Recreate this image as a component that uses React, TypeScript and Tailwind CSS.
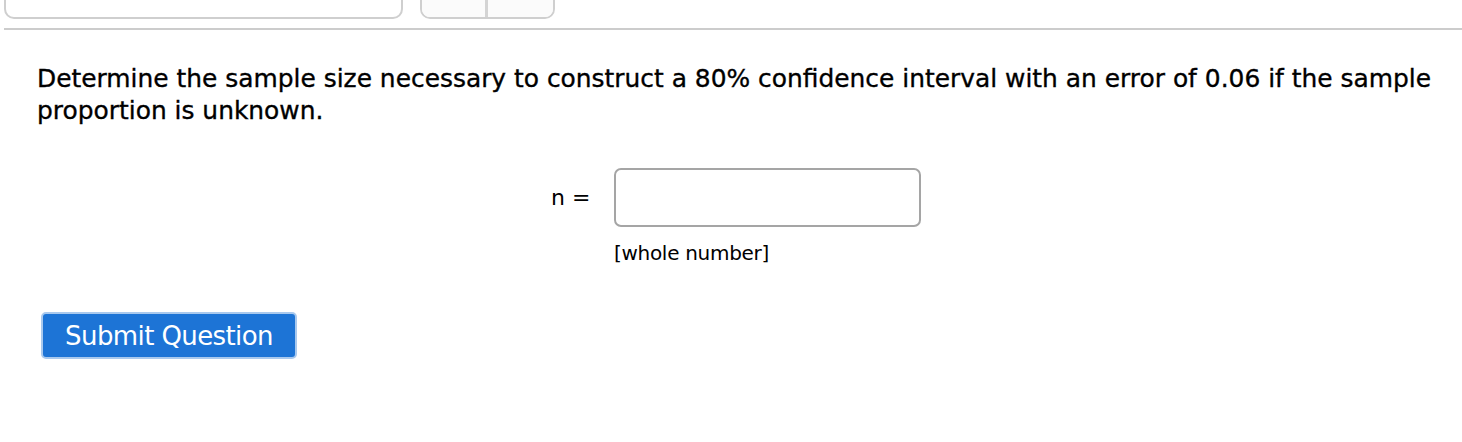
export default function App() {
  return (
    <div className="w-[1462px] h-[442px] bg-white overflow-hidden text-black" style={{ fontFamily: 'Tahoma, "DejaVu Sans", sans-serif' }}>
      {/* top controls, cut off by the viewport */}
      <div className="flex items-end gap-[17px] pl-[4px] -mt-[30px] h-[49px]">
        <div className="w-[399px] h-[49px] border-2 border-[#cfcfcf] rounded-[10px]" />
        <div className="flex w-[135px] h-[49px] border-2 border-[#cfcfcf] rounded-[10px] overflow-hidden">
          <div className="w-[66px] h-full bg-[#fbfbfb] border-r-[3px] border-[#d4d4d4]" />
          <div className="flex-1 h-full bg-[#fbfbfb]" />
        </div>
      </div>
      <div className="ml-[4px] mt-[9px] h-[2px] bg-[#cccccc]" />

      <div className="pl-[37px] pt-[33px]">
        <p className="text-[24.9px] leading-[32px] [-webkit-text-stroke:0.35px_black]">
          Determine the sample size necessary to construct a 80% confidence interval with an error of 0.06 if the sample proportion is unknown.
        </p>

        <div className="flex items-start mt-[41px] pl-[514px]">
          <span className="w-[63px] pt-[16px] text-[22px] leading-[28px]">n =</span>
          <div>
            <div className="w-[307px] h-[59px] border-2 border-[#a5a5a5] rounded-[7px]" />
            <div className="mt-[13px] text-[20px] leading-[26px] tracking-[-0.3px]">[whole number]</div>
          </div>
        </div>

        <button className="mt-[46px] ml-[4px] w-[256px] h-[47px] bg-[#1d74d6] border-2 border-[#a9c9ee] rounded-[5px] text-white text-[26px] leading-[30px] tracking-[-0.6px]">
          Submit Question
        </button>
      </div>
    </div>
  );
}
